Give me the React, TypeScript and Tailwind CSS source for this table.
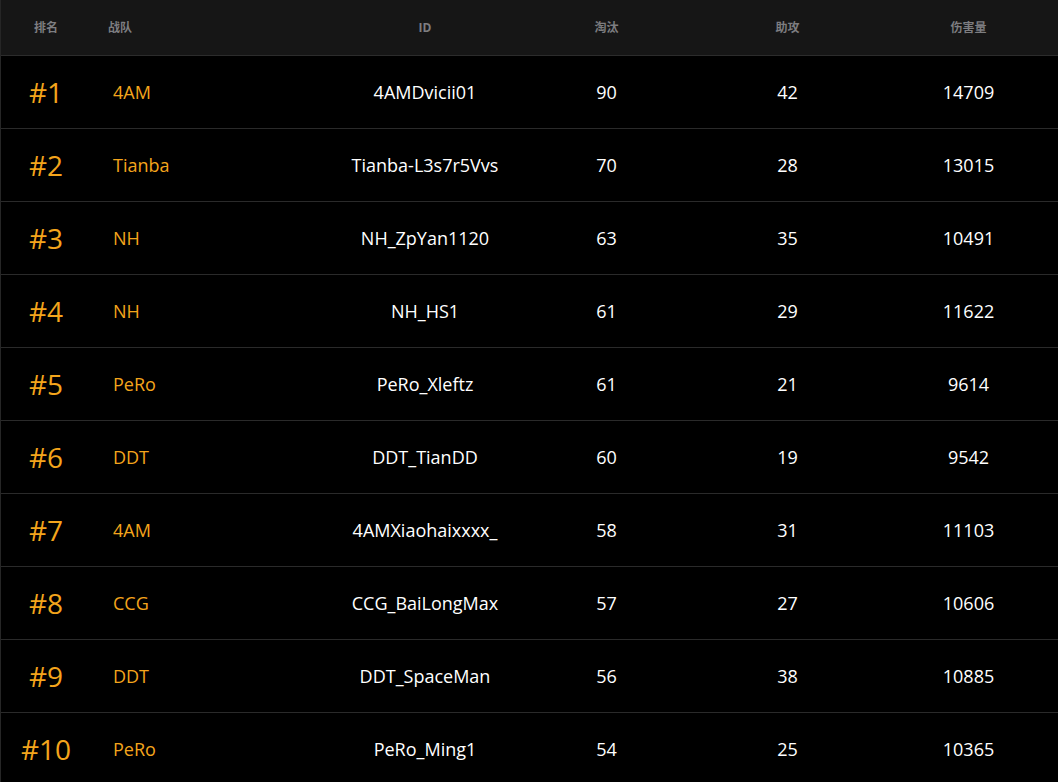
import React from "react";

const rows = [
  ["#1", "4AM", "4AMDvicii01", "90", "42", "14709"],
  ["#2", "Tianba", "Tianba-L3s7r5Vvs", "70", "28", "13015"],
  ["#3", "NH", "NH_ZpYan1120", "63", "35", "10491"],
  ["#4", "NH", "NH_HS1", "61", "29", "11622"],
  ["#5", "PeRo", "PeRo_Xleftz", "61", "21", "9614"],
  ["#6", "DDT", "DDT_TianDD", "60", "19", "9542"],
  ["#7", "4AM", "4AMXiaohaixxxx_", "58", "31", "11103"],
  ["#8", "CCG", "CCG_BaiLongMax", "57", "27", "10606"],
  ["#9", "DDT", "DDT_SpaceMan", "56", "38", "10885"],
  ["#10", "PeRo", "PeRo_Ming1", "54", "25", "10365"],
];

export default function App() {
  return (
    <div
      className="w-[1058px] min-h-[782px] bg-black border-l border-[#262626]"
      style={{ fontFamily: '"Open Sans", "Noto Sans CJK SC", sans-serif' }}
    >
      <div className="grid grid-cols-[90px_243px_182px_181px_181px_181px] h-[56px] items-center bg-[#161616] border-b border-[#2c2c2c] text-[12px] font-bold text-[#7d7d80]">
        <div className="text-center">排名</div>
        <div className="pl-[17px]">战队</div>
        <div className="text-center">ID</div>
        <div className="text-center">淘汰</div>
        <div className="text-center">助攻</div>
        <div className="text-center">伤害量</div>
      </div>
      {rows.map((r) => (
        <div
          key={r[0]}
          className="grid grid-cols-[90px_243px_182px_181px_181px_181px] h-[73px] items-center border-b border-[#2a2a2a]"
        >
          <div className="text-center text-[28px] leading-none text-[#f4a51c]">{r[0]}</div>
          <div className="pl-[22px] text-[18px] text-[#f4a51c]">{r[1]}</div>
          <div className="text-center text-[18px] text-white">{r[2]}</div>
          <div className="text-center text-[18px] text-white">{r[3]}</div>
          <div className="text-center text-[18px] text-white">{r[4]}</div>
          <div className="text-center text-[18px] text-white">{r[5]}</div>
        </div>
      ))}
    </div>
  );
}
